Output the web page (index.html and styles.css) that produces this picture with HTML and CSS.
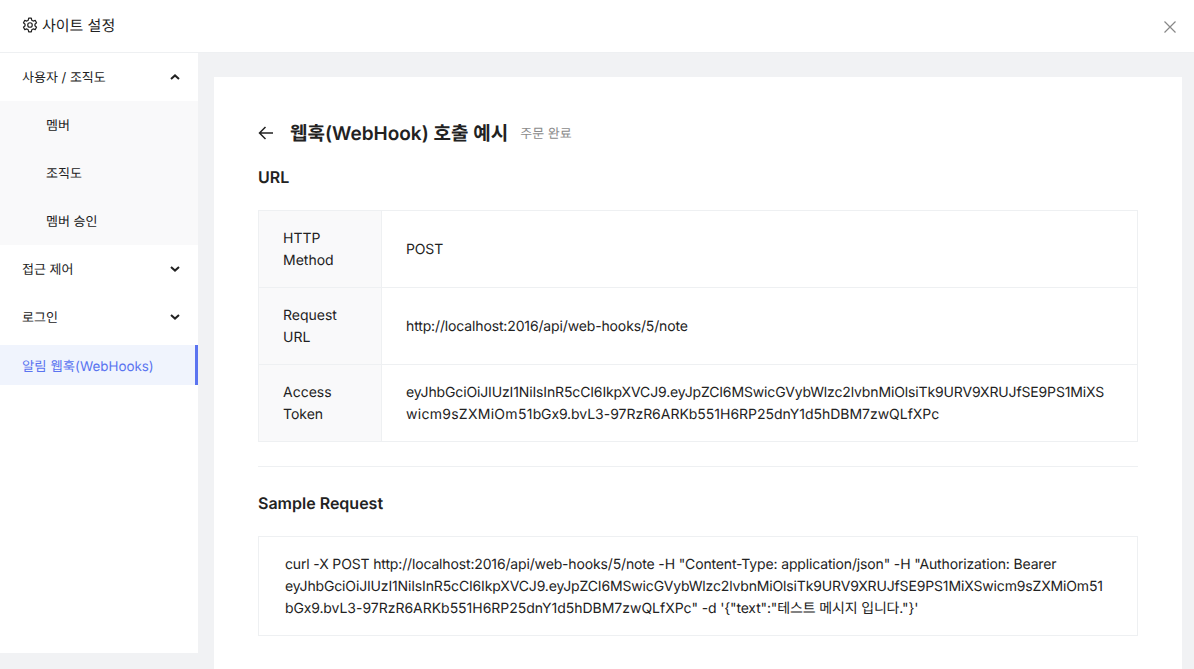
FILE: index.html
```html
<!DOCTYPE html>
<html lang="ko">

<head>
	<meta charset="UTF-8">
	<meta name="viewport" content="width=device-width, initial-scale=1.0">
	<title>사이트 설정</title>
	<link rel="stylesheet" href="styles.css">
</head>

<body>
	<header class="top">
		<div class="top-title">
			<svg class="gear" width="16" height="16" viewBox="0 0 24 24" fill="none" stroke="#222" stroke-width="1.800" stroke-linejoin="round">
				<circle cx="12" cy="12" r="3.4"></circle>
				<path d="M10 1.800h4l.7 3.200 2 1.100 3.100-1 2 3.500-2.400 2.200v2.400l2.400 2.200-2 3.500-3.100-1-2 1.100-.7 3.200h-4l-.7-3.200-2-1.100-3.100 1-2-3.500 2.400-2.200v-2.400l-2.400-2.200 2-3.500 3.100 1 2-1.100z"></path>
			</svg>
			<span>사이트 설정</span>
		</div>
		<svg class="close" width="14" height="14" viewBox="0 0 14 14" fill="none" stroke="#888" stroke-width="1.2">
			<path d="M1.500 1.500l11 11M12.500 1.500l-11 11"></path>
		</svg>
	</header>

	<div class="main">
		<nav class="side">
			<div class="menu">
				<span>사용자 / 조직도</span>
				<svg class="arrow" width="10" height="6" viewBox="0 0 10 6" fill="none" stroke="#222" stroke-width="2">
					<path d="M1 5l4-3.600 4 3.600"></path>
				</svg>
			</div>
			<div class="sub">
				<div class="sub-item">멤버</div>
				<div class="sub-item">조직도</div>
				<div class="sub-item">멤버 승인</div>
			</div>
			<div class="menu">
				<span>접근 제어</span>
				<svg class="arrow" width="10" height="6" viewBox="0 0 10 6" fill="none" stroke="#222" stroke-width="2">
					<path d="M1 1l4 3.600 4-3.600"></path>
				</svg>
			</div>
			<div class="menu">
				<span>로그인</span>
				<svg class="arrow" width="10" height="6" viewBox="0 0 10 6" fill="none" stroke="#222" stroke-width="2">
					<path d="M1 1l4 3.600 4-3.600"></path>
				</svg>
			</div>
			<div class="menu on">알림 웹훅(WebHooks)</div>
		</nav>

		<section class="content">
			<div class="card">
				<div class="head">
					<svg class="back" width="16" height="14" viewBox="0 0 16 14" fill="none" stroke="#222" stroke-width="1.500">
						<path d="M15 7H2M7.500 1L1.500 7l6 6"></path>
					</svg>
					<h2>웹훅(WebHook) 호출 예시</h2>
					<span class="event">주문 완료</span>
				</div>

				<h3 class="url-title">URL</h3>
				<div class="info">
					<div class="row">
						<div class="label">HTTP<br>Method</div>
						<div class="value">POST</div>
					</div>
					<div class="row">
						<div class="label">Request<br>URL</div>
						<div class="value">http://localhost:2016/api/web-hooks/5/note</div>
					</div>
					<div class="row">
						<div class="label">Access<br>Token</div>
						<div class="value">eyJhbGciOiJIUzI1NiIsInR5cCI6IkpXVCJ9.eyJpZCI6MSwicGVybWlzc2lvbnMiOlsiTk9URV9XRUJfSE9PS1MiXS<br><span class="wide">wicm9sZXMiOm51</span>bGx9.<span class="sig">bvL3-97RzR6ARKb551H6RP25dnY1d5hDBM7zwQLfXPc</span></div>
					</div>
				</div>

				<hr class="line">

				<h3 class="sample-title">Sample Request</h3>
				<div class="sample">curl -X POST http://localhost:2016/api/web-hooks/5/note -H "Content-Type: application/json" -H "Authorization: Bearer<br>eyJhbGciOiJIUzI1NiIsInR5cCI6IkpXVCJ9.eyJpZCI6MSwicGVybWlzc2lvbnMiOlsiTk9URV9XRUJfSE9PS1MiXSwicm9sZXMiOm51<br>bGx9.<span class="sig">bvL3-97RzR6ARKb551H6RP25dnY1d5hDBM7zwQLfXPc</span>" -d '{"text":"테스트 메시지 입니다."}'</div>
			</div>
		</section>
	</div>
</body>

</html>
```

FILE: styles.css
```css
* {
	box-sizing: border-box;
}

html,
body {
	height: 100%;
}

body {
	margin: 0;
	overflow: hidden;
	background-color: #fff;
	color: #222;
	font-family: Inter, "Noto Sans CJK KR", sans-serif;
	font-size: 14px;
	text-rendering: geometricPrecision;
}

.top {
	height: 53px;
	padding: 0 17px 2px 22px;
	display: flex;
	align-items: center;
	justify-content: space-between;
	border-bottom: 1px solid #eef0f2;
}

.top-title {
	display: flex;
	align-items: center;
	gap: 4px;
	font-size: 15px;
}

.close {
	margin-top: 3px;
}

.main {
	height: 616px;
	display: flex;
	background-color: #f1f2f4;
}

.side {
	width: 198px;
	height: 600px;
	flex-shrink: 0;
	background-color: #fff;
}

.menu {
	height: 48px;
	padding: 0 18px 2px 22px;
	display: flex;
	align-items: center;
	justify-content: space-between;
	font-size: 13px;
}

.arrow {
	margin-top: 2px;
}

.menu.on {
	height: 40px;
	margin-top: 4px;
	padding-bottom: 1px;
	color: #5b74f0;
	background-color: #f0f4fd;
	border-right: 3px solid #5b74f0;
	font-size: 13.4px;
}

.sub {
	background-color: #f9f9fa;
}

.sub-item {
	height: 48px;
	padding: 0 0 1px 46px;
	display: flex;
	align-items: center;
	font-size: 13px;
}

.content {
	flex: 1;
	min-width: 0;
	padding: 24px 12px 0 16px;
}

.card {
	height: 100%;
	padding: 40px 44px 0;
	background-color: #fff;
}

.head {
	height: 32px;
	display: flex;
	align-items: center;
}

.back {
	margin-right: 16px;
}

.head h2 {
	margin: 0 12px 0 0;
	font-size: 19px;
	font-weight: 600;
	position: relative;
	top: -1px;
}

.event {
	color: #8b8b8b;
	font-size: 13px;
	position: relative;
	top: -1px;
}

h3 {
	margin: 0;
	font-size: 16px;
	font-weight: 600;
	line-height: 24px;
}

.url-title {
	margin-top: 16px;
}

.info {
	margin-top: 21px;
	border: 1px solid #eef0f2;
}

.row {
	display: flex;
	height: 77px;
	border-bottom: 1px solid #eef0f2;
}

.row:last-child {
	height: 76px;
	border-bottom: 0;
}

.label {
	width: 123px;
	flex-shrink: 0;
	padding: 2px 0 0 24px;
	display: flex;
	align-items: center;
	background-color: #f9f9fa;
	border-right: 1px solid #eef0f2;
	line-height: 22px;
}

.value {
	padding: 2px 0 0 24px;
	align-self: center;
	line-height: 22px;
	white-space: nowrap;
	letter-spacing: -0.14px;
}

.sig {
	letter-spacing: -0.02px;
}

.wide {
	letter-spacing: 0.28px;
}

.line {
	margin: 24px 0 0;
	border: 0;
	border-top: 1px solid #eef0f2;
}

.sample-title {
	margin-top: 24px;
}

.sample {
	margin-top: 21px;
	height: 100px;
	padding: 17px 26px;
	border: 1px solid #eef0f2;
	line-height: 22px;
	white-space: nowrap;
	letter-spacing: -0.15px;
}
```
